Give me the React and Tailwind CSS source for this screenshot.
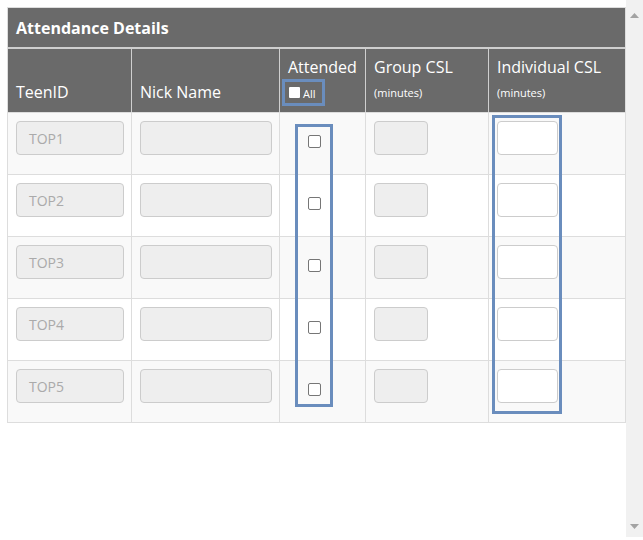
import React from "react";

const ROWS = ["TOP1", "TOP2", "TOP3", "TOP4", "TOP5"];

function Box() {
  return <span className="block w-[13px] h-[13px] rounded-[2px] border border-[#767676] bg-white" />;
}

export default function App() {
  return (
    <div className="flex w-[643px] h-[540px] bg-white font-['Open_Sans',_sans-serif]">
      <div className="relative w-[626px] pl-[7px] pt-[7px]">
        <div className="border border-[#ddd] w-[619px]">
          {/* title */}
          <div className="h-[41px] bg-[#6a6a6a] border-b-2 border-[#cfcfcf] flex items-center px-2 text-white text-[16px] font-bold">
            Attendance Details
          </div>

          {/* header */}
          <div className="grid grid-cols-[124px_148px_86px_123px_136px] h-[63px] bg-[#6a6a6a] text-white text-[16px] leading-6">
            <div className="border-r border-[#cfcfcf] flex items-end px-2 pb-2">TeenID</div>
            <div className="border-r border-[#cfcfcf] flex items-end px-2 pb-2">Nick Name</div>
            <div className="border-r border-[#cfcfcf] pl-2 pt-[6px]">
              <div>Attended</div>
              <div className="flex items-center h-[27px] pl-[1px] gap-[3px]">
                <span className="block w-[11px] h-[11px] bg-white rounded-[1px]" />
                <span className="text-[11px] leading-4 pt-[2px]">All</span>
              </div>
            </div>
            <div className="border-r border-[#cfcfcf] px-2 pt-[6px]">
              <div>Group CSL</div>
              <div className="text-[11px] leading-4 pt-[6px]">(minutes)</div>
            </div>
            <div className="px-2 pt-[6px]">
              <div>Individual CSL</div>
              <div className="text-[11px] leading-4 pt-[6px]">(minutes)</div>
            </div>
          </div>

          {/* rows */}
          {ROWS.map((id, i) => (
            <div
              key={id}
              className={`grid grid-cols-[124px_148px_86px_123px_136px] h-[62px] border-t border-[#ddd] ${
                i % 2 === 0 ? "bg-[#f9f9f9]" : "bg-white"
              }`}
            >
              <div className="border-r border-[#ddd] pl-2 pt-2">
                <div className="w-[108px] h-[34px] rounded-[4px] border border-[#ccc] bg-[#eee] flex items-center pl-3 text-[14px] text-[#aaa]">
                  {id}
                </div>
              </div>
              <div className="border-r border-[#ddd] pl-2 pt-2">
                <div className="w-[132px] h-[34px] rounded-[4px] border border-[#ccc] bg-[#eee]" />
              </div>
              <div className="border-r border-[#ddd] pl-[28px] pt-[22px]">
                <Box />
              </div>
              <div className="border-r border-[#ddd] pl-2 pt-2">
                <div className="w-[54px] h-[34px] rounded-[4px] border border-[#ccc] bg-[#eee]" />
              </div>
              <div className="pl-2 pt-2">
                <div className="w-[61px] h-[34px] rounded-[4px] border border-[#ccc] bg-white" />
              </div>
            </div>
          ))}
        </div>

        {/* highlight annotations */}
        <div className="absolute left-[282px] top-[79px] w-[43px] h-[27px] border-[3px] border-[#6a8dbd]" />
        <div className="absolute left-[295px] top-[124px] w-[38px] h-[283px] border-[3px] border-[#6a8dbd]" />
        <div className="absolute left-[492px] top-[115px] w-[70px] h-[299px] border-[3px] border-[#6a8dbd]" />
      </div>

      {/* scrollbar */}
      <div className="w-[17px] h-[537px] bg-[#f1f1f1] flex flex-col justify-between items-center pt-[13px] pb-[8px]">
        <svg width="9" height="5" viewBox="0 0 9 5">
          <polygon points="0,5 4.5,0 9,5" fill="#a3a3a3" />
        </svg>
        <svg width="9" height="5" viewBox="0 0 9 5">
          <polygon points="0,0 9,0 4.5,5" fill="#a3a3a3" />
        </svg>
      </div>
    </div>
  );
}
